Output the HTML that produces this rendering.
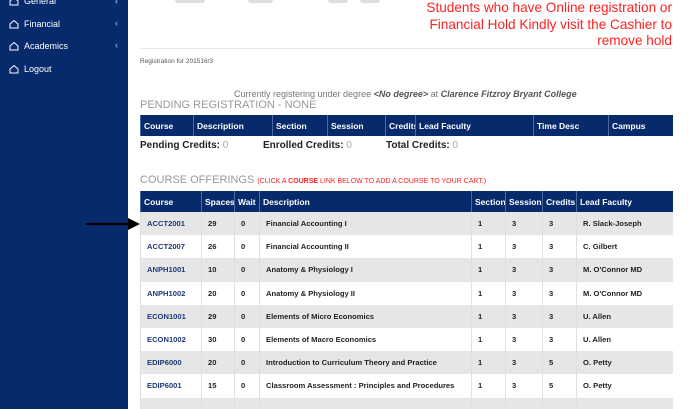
<!DOCTYPE html>
<html style="overflow:hidden;height:409px"><head><style>
*{margin:0;padding:0;box-sizing:border-box}
body{width:700px;height:409px;overflow:hidden;background:#fff;font-family:"Liberation Sans",Arial,sans-serif;position:relative}
#sb{position:absolute;left:0;top:0;width:128px;height:409px;background:#062a6c;color:#fff;font-size:9px}
.mi{position:absolute;left:9px}
.mi svg{position:absolute;left:0;top:0}
.mi span{position:absolute;left:15px;top:0;white-space:nowrap}
.ch{position:absolute;left:115px;font-size:9px;color:#ccd}
.a{position:absolute;white-space:nowrap}
table{border-collapse:collapse;position:absolute;table-layout:fixed}
th{background:#062a6c;color:#fff;font-size:8.5px;font-weight:bold;text-align:left;padding-left:3px;border-left:1px solid #4a6aa0;height:21px;white-space:nowrap;overflow:hidden}
td{font-size:7.6px;font-weight:bold;color:#222;padding-left:6px;border-left:1px solid #e0e0e0;height:23.2px;white-space:nowrap;overflow:hidden}
tr.g td{background:#e6e6e6}
td.c{color:#1d3a78}
</style></head><body>
<div id="sb">
<div class="mi" style="top:-4px"><svg width="10" height="10" viewBox="0 0 10 10"><path d="M1 5L5 1.5L9 5V9H1Z" fill="none" stroke="#fff" stroke-width="1"/></svg><span>General</span></div><div class="ch" style="top:-4px">‹</div>
<div class="mi" style="top:19px"><svg width="10" height="10" viewBox="0 0 10 10"><path d="M1 5L5 1.5L9 5V9H1Z" fill="none" stroke="#fff" stroke-width="1"/></svg><span>Financial</span></div><div class="ch" style="top:18px">‹</div>
<div class="mi" style="top:41px"><svg width="10" height="10" viewBox="0 0 10 10"><path d="M1 5L5 1.5L9 5V9H1Z" fill="none" stroke="#fff" stroke-width="1"/></svg><span>Academics</span></div><div class="ch" style="top:40px">‹</div>
<div class="mi" style="top:64px"><svg width="10" height="10" viewBox="0 0 10 10"><path d="M1 5L5 1.5L9 5V9H1Z" fill="none" stroke="#fff" stroke-width="1"/></svg><span>Logout</span></div>
</div>
<div class="a" style="left:175px;top:0;width:30px;height:3px;background:#ddd;border-radius:0 0 4px 4px"></div>
<div class="a" style="left:248px;top:0;width:25px;height:3px;background:#ddd;border-radius:0 0 4px 4px"></div>
<div class="a" style="left:328px;top:0;width:20px;height:3px;background:#ddd;border-radius:0 0 4px 4px"></div>
<div class="a" style="left:360px;top:0;width:20px;height:3px;background:#ddd;border-radius:0 0 4px 4px"></div>
<div class="a" style="right:28px;top:0;text-align:right;color:#f22;font-size:13.6px;line-height:16.5px">Students who have Online registration or<br>Financial Hold Kindly visit the Cashier to<br>remove hold</div>
<div class="a" style="left:140px;top:48px;width:532px;height:1px;background:#e8e8e8"></div>
<div class="a" style="left:140px;top:58px;font-size:6.5px;color:#555">Registration for 201516/3</div>
<div class="a" style="left:234px;top:89px;font-size:9px;color:#777">Currently registering under degree <b><i style="color:#555">&lt;No degree&gt;</i></b> at <b><i style="color:#555">Clarence Fitzroy Bryant College</i></b></div>
<div class="a" style="left:140px;top:99px;font-size:11px;color:#999">PENDING REGISTRATION - NONE</div>
<table style="left:140px;top:115px;width:532px">
<colgroup><col style="width:53px"><col style="width:79px"><col style="width:55px"><col style="width:58px"><col style="width:30px"><col style="width:118px"><col style="width:75px"><col style="width:64px"></colgroup>
<tr><th>Course</th><th>Description</th><th>Section</th><th>Session</th><th>Credits</th><th>Lead Faculty</th><th>Time Desc</th><th>Campus</th></tr></table>
<div class="a" style="left:140px;top:140px;font-size:10px;font-weight:bold;color:#222">Pending Credits: <span style="font-weight:normal;color:#aaa">0</span></div>
<div class="a" style="left:263px;top:140px;font-size:10px;font-weight:bold;color:#222">Enrolled Credits: <span style="font-weight:normal;color:#aaa">0</span></div>
<div class="a" style="left:386px;top:140px;font-size:10px;font-weight:bold;color:#222">Total Credits: <span style="font-weight:normal;color:#aaa">0</span></div>
<div class="a" style="left:140px;top:174px;font-size:11px;color:#999">COURSE OFFERINGS <span style="font-size:7px;color:#f22">(CLICK A <b>COURSE</b> LINK BELOW TO ADD A COURSE TO YOUR CART.)</span></div>
<table style="left:140px;top:191px;width:532px">
<colgroup><col style="width:61px"><col style="width:33px"><col style="width:25px"><col style="width:212px"><col style="width:34px"><col style="width:37px"><col style="width:34px"><col style="width:96px"></colgroup>
<tr><th>Course</th><th>Spaces</th><th>Wait</th><th>Description</th><th>Section</th><th>Session</th><th>Credits</th><th>Lead Faculty</th></tr>
<tr class="g"><td class="c">ACCT2001</td><td>29</td><td>0</td><td>Financial Accounting I</td><td>1</td><td>3</td><td>3</td><td>R. Slack-Joseph</td></tr>
<tr><td class="c">ACCT2007</td><td>26</td><td>0</td><td>Financial Accounting II</td><td>1</td><td>3</td><td>3</td><td>C. Gilbert</td></tr>
<tr class="g"><td class="c">ANPH1001</td><td>10</td><td>0</td><td>Anatomy &amp; Physiology I</td><td>1</td><td>3</td><td>3</td><td>M. O'Connor MD</td></tr>
<tr><td class="c">ANPH1002</td><td>20</td><td>0</td><td>Anatomy &amp; Physiology II</td><td>1</td><td>3</td><td>3</td><td>M. O'Connor MD</td></tr>
<tr class="g"><td class="c">ECON1001</td><td>29</td><td>0</td><td>Elements of Micro Economics</td><td>1</td><td>3</td><td>3</td><td>U. Allen</td></tr>
<tr><td class="c">ECON1002</td><td>30</td><td>0</td><td>Elements of Macro Economics</td><td>1</td><td>3</td><td>3</td><td>U. Allen</td></tr>
<tr class="g"><td class="c">EDIP6000</td><td>20</td><td>0</td><td>Introduction to Curriculum Theory and Practice</td><td>1</td><td>3</td><td>5</td><td>O. Petty</td></tr>
<tr><td class="c">EDIP6001</td><td>15</td><td>0</td><td>Classroom Assessment : Principles and Procedures</td><td>1</td><td>3</td><td>5</td><td>O. Petty</td></tr>
<tr class="g"><td></td><td></td><td></td><td></td><td></td><td></td><td></td><td></td></tr>
</table>
<svg class="a" style="left:84px;top:217px" width="60" height="14" viewBox="0 0 60 14"><path d="M2 7H46" stroke="#000" stroke-width="2"/><path d="M44 1L56 7L44 13Z" fill="#000"/></svg>
</body></html>
